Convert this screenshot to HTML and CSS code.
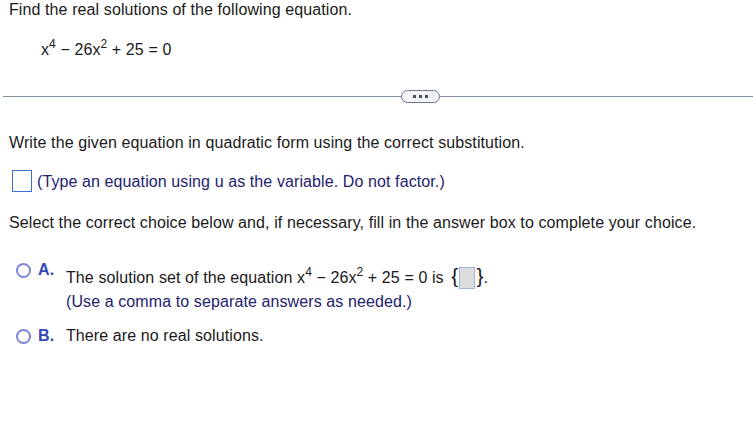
FILE: index.html
```html
<!DOCTYPE html>
<html>
<head>
<meta charset="utf-8">
<link rel="stylesheet" href="styles.css">
</head>
<body>
<div class="question">
  <p class="prompt">Find the real solutions of the following equation.</p>
  <p class="equation">x<sup>4</sup> − 26x<sup>2</sup> + 25 = 0</p>
</div>
<div class="divider">
  <span class="pill"><span class="dot"></span><span class="dot"></span><span class="dot"></span></span>
</div>
<div class="work">
  <p class="step">Write the given equation in quadratic form using the correct substitution.</p>
  <div class="answer-row">
    <span class="box"></span>
    <span class="hint">(Type an equation using u as the variable. Do not factor.)</span>
  </div>
  <p class="step select">Select the correct choice below and, if necessary, fill in the answer box to complete your choice.</p>
  <div class="choice choice-a">
    <span class="radio"></span>
    <span class="letter">A.</span>
    <div class="choice-body">
      <div class="line">The solution set of the equation x<sup>4</sup> − 26x<sup>2</sup> + 25 = 0 is <span class="brace">{</span><span class="setbox"></span><span class="brace">}</span>.</div>
      <div class="hint line2">(Use a comma to separate answers as needed.)</div>
    </div>
  </div>
  <div class="choice choice-b">
    <span class="radio"></span>
    <span class="letter">B.</span>
    <div class="choice-body">
      <div class="line">There are no real solutions.</div>
    </div>
  </div>
</div>
</body>
</html>
```
FILE: styles.css
```css
html, body {
  margin: 0;
  padding: 0;
  background: #ffffff;
}
body {
  font-family: "Liberation Sans", Arial, sans-serif;
  font-size: 16px;
  letter-spacing: 0.1px;
  color: #1a1a1a;
  width: 753px;
  height: 428px;
  overflow: hidden;
}
p { margin: 0; }
sup {
  font-size: 12px;
  vertical-align: 0;
  position: relative;
  top: -7px;
  line-height: 0;
}
.question {
  padding: 1px 0 0 9px;
}
.prompt {
  line-height: 18px;
}
.equation {
  margin: 22px 0 0 32px;
  line-height: 18px;
}
.divider {
  margin: 31px 0 0 3px;
  height: 13px;
  display: flex;
  align-items: center;
  position: relative;
}
.divider::before {
  content: "";
  position: absolute;
  left: 0;
  right: 0;
  top: 6px;
  height: 1px;
  background: #8590a6;
}
.pill {
  position: relative;
  margin-left: 398px;
  width: 37px;
  height: 11px;
  border: 1px solid #6b778a;
  border-radius: 7px;
  background: #f1f3f6;
  display: flex;
  align-items: center;
  justify-content: center;
  gap: 3px;
}
.dot {
  width: 3px;
  height: 3px;
  background: #4a5260;
}
.work {
  padding: 31px 0 0 9px;
}
.step {
  line-height: 18px;
}
.answer-row {
  display: flex;
  align-items: center;
  margin-top: 18px;
  margin-left: 3px;
  height: 22px;
}
.box {
  width: 18px;
  height: 20px;
  border: 1px solid #3b6fd6;
}
.hint {
  color: #22226e;
  line-height: 18px;
}
.answer-row .hint {
  margin-left: 5px;
  margin-top: 2px;
}
.select {
  margin-top: 22px;
}
.choice {
  display: flex;
  align-items: flex-start;
  margin-left: 7px;
}
.choice-a {
  margin-top: 31px;
}
.choice-b {
  margin-top: 16px;
}
.choice-b .radio {
  margin-top: 2px;
}
.radio {
  width: 11px;
  height: 11px;
  border: 2px solid #7b86d6;
  border-radius: 50%;
  flex-shrink: 0;
}
.letter {
  color: #3447b8;
  font-weight: bold;
  margin-left: 7px;
  width: 28px;
  line-height: 18px;
}
.choice-a .letter {
  margin-top: -2px;
}
.choice-a .choice-body {
  margin-top: 4px;
}
.choice-body .line {
  line-height: 18px;
}
.line2 {
  margin-top: 4px;
}
.brace {
  font-size: 21px;
  color: #1a1a1a;
  margin-left: 3px;
}
.brace + .setbox + .brace {
  margin-left: 0;
}
.setbox {
  display: inline-block;
  vertical-align: -6px;
  width: 14px;
  height: 20px;
  background: #dcdcdc;
  border: 1px solid #9fb6e2;
  margin: 0 1px;
}
```
